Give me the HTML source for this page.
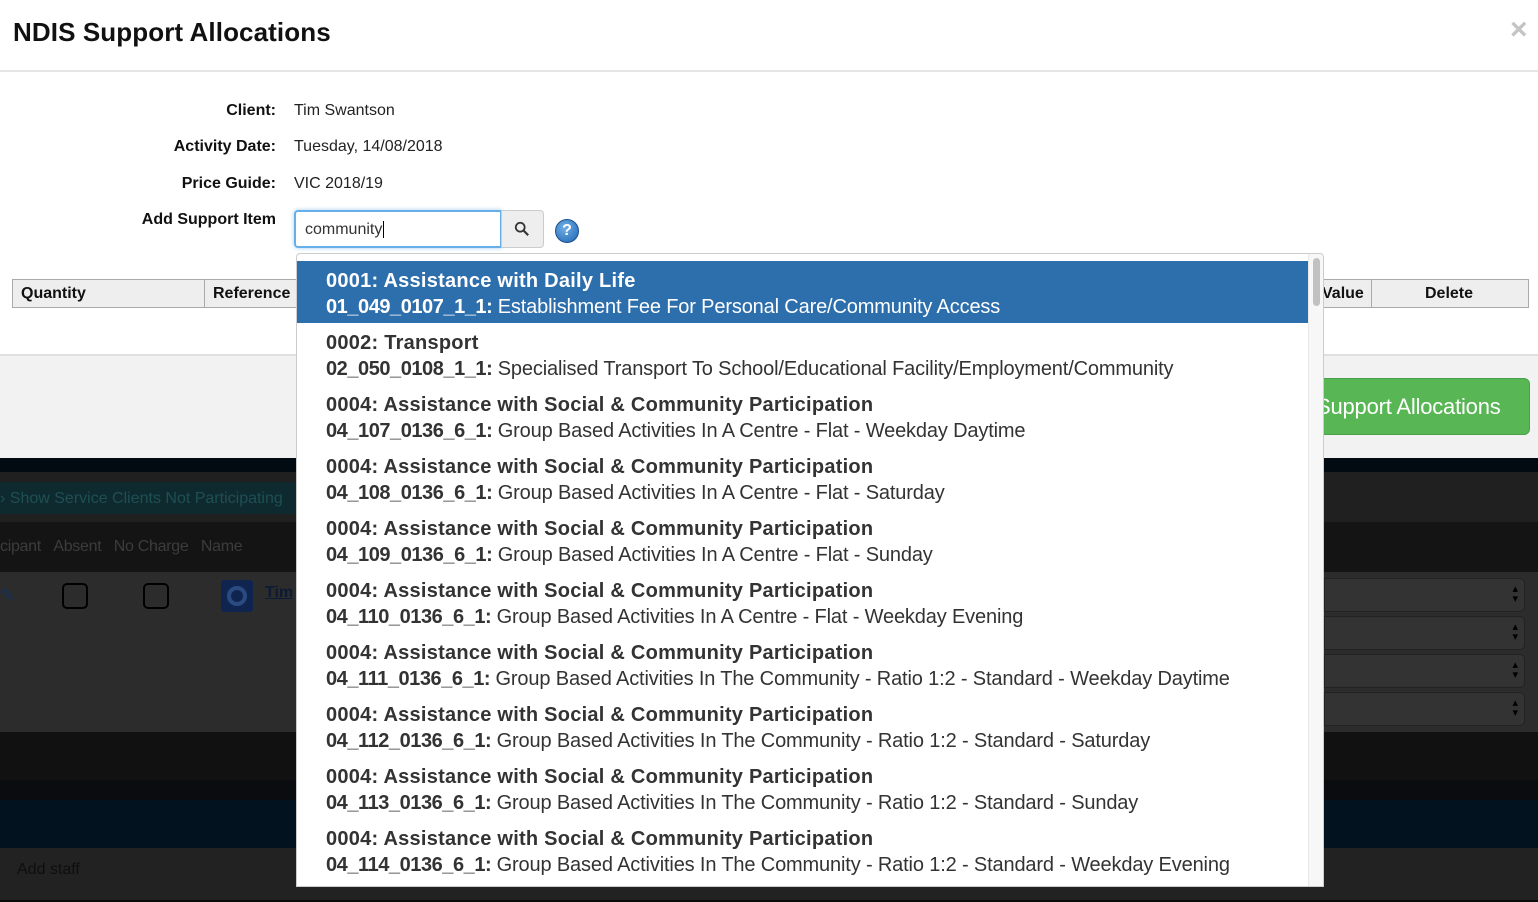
<!DOCTYPE html>
<html><head><meta charset="utf-8"><style>
*{box-sizing:border-box;margin:0;padding:0}
body{width:1538px;height:902px;overflow:hidden;position:relative;font-family:"Liberation Sans",Arial,sans-serif;background:#0a0a0a}
.abs{position:absolute}
.lbl{position:absolute;right:1262px;font-weight:bold;font-size:16px;color:#111;text-align:right;white-space:nowrap}
.val{position:absolute;left:294px;font-size:16px;color:#222}
.dd{position:absolute;left:296px;top:253px;width:1028px;height:634px;background:#fff;border:1px solid #ccc;border-radius:4px 4px 0 0;overflow:hidden}
.it{height:62px;padding:7px 0 0 29px;font-size:20px;line-height:26px;color:#333;white-space:nowrap;letter-spacing:-0.15px}
.it b{font-weight:bold;letter-spacing:0.25px}
.it i{font-style:normal;font-weight:bold;letter-spacing:-0.45px}
.it.sel{background:#2d6ead;color:#fff;width:1012px}
.sb{position:absolute;right:0;top:0;width:15px;height:634px;background:#f7f7f7;border-left:1px solid #e8e8e8}
.sb div{position:absolute;left:4px;top:4px;width:7px;height:48px;background:#c1c1c1;border-radius:4px}
.sel2{position:absolute;left:1324px;width:201px;height:34px;background:#333;border:1px solid #222;border-radius:0 5px 5px 0}
.sel2:after{content:"\25B4\A\25BE";white-space:pre;position:absolute;right:6px;top:5px;font-size:11px;line-height:10px;color:#000}
</style></head><body>
<div class="abs" style="left:0;top:458px;width:1538px;height:14px;background:#030b12"></div>
<div class="abs" style="left:0;top:472px;width:1538px;height:50px;background:#202020"></div>
<div class="abs" style="left:0;top:482px;width:296px;height:32px;background:#0f2a2f"></div>
<div class="abs" style="left:0;top:490px;font-size:16px;color:#1d4f55;white-space:nowrap">› Show Service Clients Not Participating</div>
<div class="abs" style="left:0;top:522px;width:1538px;height:50px;background:#141414"></div>
<div class="abs" style="left:0;top:538px;font-size:16px;color:#3c3c3c;white-space:nowrap;letter-spacing:-0.3px">cipant&nbsp;&nbsp;&nbsp;Absent&nbsp;&nbsp;&nbsp;No Charge&nbsp;&nbsp;&nbsp;Name</div>
<div class="abs" style="left:0;top:572px;width:1538px;height:160px;background:#2c2c2c"></div>
<div class="abs" style="left:0;top:585px;width:8px;height:20px;color:#13305a;font-size:18px">✎</div>
<div class="abs" style="left:62px;top:583px;width:26px;height:26px;border:2px solid #000;border-radius:5px"></div>
<div class="abs" style="left:143px;top:583px;width:26px;height:26px;border:2px solid #000;border-radius:5px"></div>
<div class="abs" style="left:221px;top:580px;width:32px;height:32px;background:#0f2550;border-radius:3px"></div>
<div class="abs" style="left:227px;top:586px;width:20px;height:20px;border:4px solid #2a4a80;border-radius:50%"></div>
<div class="abs" style="left:265px;top:584px;font-size:16px;color:#0c1a33;text-decoration:underline;font-weight:bold">Tim</div>
<div class="sel2" style="top:578px"></div><div class="sel2" style="top:616px"></div><div class="sel2" style="top:654px"></div><div class="sel2" style="top:692px"></div>
<div class="abs" style="left:0;top:732px;width:1538px;height:48px;background:#111"></div>
<div class="abs" style="left:0;top:780px;width:1538px;height:20px;background:#0a0c0f"></div>
<div class="abs" style="left:0;top:800px;width:1538px;height:48px;background:#02121e"></div>
<div class="abs" style="left:0;top:848px;width:1538px;height:52px;background:#222"></div>
<div class="abs" style="left:17px;top:861px;font-size:16px;color:#0e0e0e">Add staff</div>
<div class="abs" style="left:0;top:0;width:1538px;height:458px;background:#fff"></div>
<div class="abs" style="left:13px;top:17px;font-size:26px;color:#111;font-weight:bold;letter-spacing:0.1px">NDIS Support Allocations</div>
<div class="abs" style="left:1510px;top:15px;font-size:30px;line-height:30px;color:#c4c4c4;font-weight:bold">×</div>
<div class="abs" style="left:0;top:70px;width:1538px;height:2px;background:#e5e5e5"></div>
<div class="lbl" style="top:102px">Client:</div><div class="val" style="top:102px">Tim Swantson</div>
<div class="lbl" style="top:138px">Activity Date:</div><div class="val" style="top:138px">Tuesday, 14/08/2018</div>
<div class="lbl" style="top:175px">Price Guide:</div><div class="val" style="top:175px">VIC 2018/19</div>
<div class="lbl" style="top:211px">Add Support Item</div>
<div class="abs" style="left:294px;top:210px;width:208px;height:38px;border:2px solid #66afe9;border-radius:4px 0 0 4px;box-shadow:0 0 4px rgba(102,175,233,.6);padding:9px 9px;font-size:16px;color:#333">community<span style="border-left:1px solid #000;margin-left:1px"></span></div>
<div class="abs" style="left:501px;top:210px;width:43px;height:38px;background:#eee;border:1px solid #ccc;border-radius:0 4px 4px 0"></div>
<svg class="abs" style="left:514px;top:221px" width="16" height="16" viewBox="0 0 18 18"><circle cx="7" cy="7" r="5" fill="none" stroke="#333" stroke-width="2"/><path d="M11 11l5 5" stroke="#333" stroke-width="2.4"/></svg>
<div class="abs" style="left:555px;top:219px;width:24px;height:24px;border-radius:50%;background:radial-gradient(circle at 40% 35%,#6fb0e8,#1f64b0);border:1px solid #1a4f8c;color:#fff;font-weight:bold;font-size:16px;text-align:center;line-height:22px">?</div>
<div class="abs" style="left:12px;top:279px;width:1517px;height:29px;background:#eee;border:1px solid #aaa"></div>
<div class="abs" style="left:204px;top:279px;width:1px;height:29px;background:#aaa"></div>
<div class="abs" style="left:1371px;top:279px;width:1px;height:29px;background:#aaa"></div>
<div class="abs" style="left:21px;top:285px;font-size:16px;font-weight:bold;color:#111">Quantity</div>
<div class="abs" style="left:213px;top:285px;font-size:16px;font-weight:bold;color:#111">Reference</div>
<div class="abs" style="left:1322px;top:285px;font-size:16px;font-weight:bold;color:#111">Value</div>
<div class="abs" style="left:1425px;top:285px;font-size:16px;font-weight:bold;color:#111">Delete</div>
<div class="abs" style="left:0;top:354px;width:1538px;height:104px;background:#f2f2f2;border-top:2px solid #e0e0e0"></div>
<div class="abs" style="left:1280px;top:378px;width:250px;height:57px;background:#59b655;border:1px solid #48a048;border-radius:6px;color:#fff;font-size:22px;line-height:56px;padding-left:35px;letter-spacing:-0.2px">Support Allocations</div>
<div class="dd">
<div style="height:7px"></div>
<div class="it sel"><b>0001: Assistance with Daily Life</b><br><i>01_049_0107_1_1:</i> Establishment Fee For Personal Care/Community Access</div>
<div class="it"><b>0002: Transport</b><br><i>02_050_0108_1_1:</i> Specialised Transport To School/Educational Facility/Employment/Community</div>
<div class="it"><b>0004: Assistance with Social &amp; Community Participation</b><br><i>04_107_0136_6_1:</i> Group Based Activities In A Centre - Flat - Weekday Daytime</div>
<div class="it"><b>0004: Assistance with Social &amp; Community Participation</b><br><i>04_108_0136_6_1:</i> Group Based Activities In A Centre - Flat - Saturday</div>
<div class="it"><b>0004: Assistance with Social &amp; Community Participation</b><br><i>04_109_0136_6_1:</i> Group Based Activities In A Centre - Flat - Sunday</div>
<div class="it"><b>0004: Assistance with Social &amp; Community Participation</b><br><i>04_110_0136_6_1:</i> Group Based Activities In A Centre - Flat - Weekday Evening</div>
<div class="it"><b>0004: Assistance with Social &amp; Community Participation</b><br><i>04_111_0136_6_1:</i> Group Based Activities In The Community - Ratio 1:2 - Standard - Weekday Daytime</div>
<div class="it"><b>0004: Assistance with Social &amp; Community Participation</b><br><i>04_112_0136_6_1:</i> Group Based Activities In The Community - Ratio 1:2 - Standard - Saturday</div>
<div class="it"><b>0004: Assistance with Social &amp; Community Participation</b><br><i>04_113_0136_6_1:</i> Group Based Activities In The Community - Ratio 1:2 - Standard - Sunday</div>
<div class="it"><b>0004: Assistance with Social &amp; Community Participation</b><br><i>04_114_0136_6_1:</i> Group Based Activities In The Community - Ratio 1:2 - Standard - Weekday Evening</div>
<div class="sb"><div></div></div>
</div>
</body></html>
